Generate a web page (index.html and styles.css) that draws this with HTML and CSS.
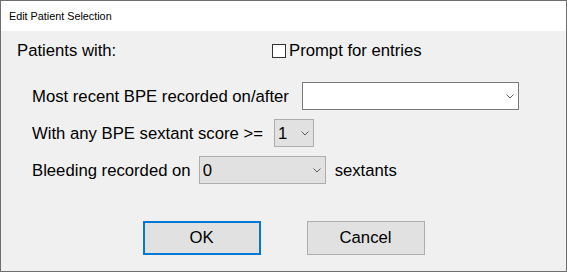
FILE: index.html
```html
<!DOCTYPE html>
<html>
<head>
<meta charset="utf-8">
<link rel="stylesheet" href="styles.css">
</head>
<body>
<div class="window">
  <div class="titlebar">Edit Patient Selection</div>
  <div class="content">
    <div class="row-head">
      <span class="head-label">Patients with:</span>
      <label class="check"><span class="box"></span><span>Prompt for entries</span></label>
    </div>
    <div class="row first">
      <span class="label">Most recent BPE recorded on/after</span>
      <div class="combo white w-date gap-a"><span class="val"></span><svg class="chev" width="8" height="5" viewBox="0 0 8 5"><polyline points="0.5,0.5 4,4 7.5,0.5" fill="none" stroke="#5a5a5a" stroke-width="1"/></svg></div>
    </div>
    <div class="row">
      <span class="label">With any BPE sextant score &gt;=</span>
      <div class="combo w-score gap-b"><span class="val">1</span><svg class="chev" width="8" height="5" viewBox="0 0 8 5"><polyline points="0.5,0.5 4,4 7.5,0.5" fill="none" stroke="#5a5a5a" stroke-width="1"/></svg></div>
    </div>
    <div class="row">
      <span class="label">Bleeding recorded on</span>
      <div class="combo w-bleed gap-c"><span class="val">0</span><svg class="chev" width="8" height="5" viewBox="0 0 8 5"><polyline points="0.5,0.5 4,4 7.5,0.5" fill="none" stroke="#5a5a5a" stroke-width="1"/></svg></div>
      <span class="label after">sextants</span>
    </div>
    <div class="buttons">
      <button class="btn default">OK</button>
      <button class="btn">Cancel</button>
    </div>
  </div>
</div>
</body>
</html>
```
FILE: styles.css
```css
* { box-sizing: border-box; }
html, body { margin: 0; padding: 0; background: #f0f0f0; }
.window {
  width: 567px;
  height: 272px;
  border: 1px solid #6e6e6e;
  background: #f0f0f0;
  font-family: "Liberation Sans", Arial, sans-serif;
  font-size: 16.7px;
  color: #000;
  display: flex;
  flex-direction: column;
}
.titlebar {
  height: 30px;
  padding: 1px 0 0 8px;
  line-height: 29px;
  background: #fff;
  font-size: 10.8px;
  color: #000;
}
.content {
  flex: 1;
  display: flex;
  flex-direction: column;
}
.row-head {
  display: flex;
  align-items: center;
  margin-top: 10px;
  padding-left: 16px;
  line-height: 19px;
  height: 19px;
}
.head-label { width: 255px; }
.check { display: flex; align-items: center; gap: 3px; }
.box {
  width: 14px;
  height: 14px;
  border: 1px solid #333;
  background: #fff;
}
.row {
  display: flex;
  align-items: center;
  padding-left: 31px;
  margin-top: 9px;
  line-height: 19px;
}
.row.first { margin-top: 22px; }
.combo {
  height: 28px;
  border: 1px solid #adadad;
  background: #e1e1e1;
  display: flex;
  align-items: center;
  justify-content: space-between;
  padding: 0 4px 0 3px;
}
.combo.white { background: #fff; border-color: #7a7a7a; }
.chev { display: block; }
.w-date { width: 217px; }
.w-score { width: 40px; }
.w-bleed { width: 127px; }
.gap-a { margin-left: 13px; }
.gap-b { margin-left: 11px; }
.gap-c { margin-left: 8px; }
.after { margin-left: 9px; }
.buttons {
  display: flex;
  justify-content: center;
  gap: 46px;
  margin-top: 37px;
}
.btn {
  width: 118px;
  height: 34px;
  background: #e1e1e1;
  border: 1px solid #adadad;
  font-family: "Liberation Sans", Arial, sans-serif;
  font-size: 16.7px;
  color: #000;
  padding: 0;
  margin: 0;
}
.btn.default { border: 2px solid #0078d7; }
```
